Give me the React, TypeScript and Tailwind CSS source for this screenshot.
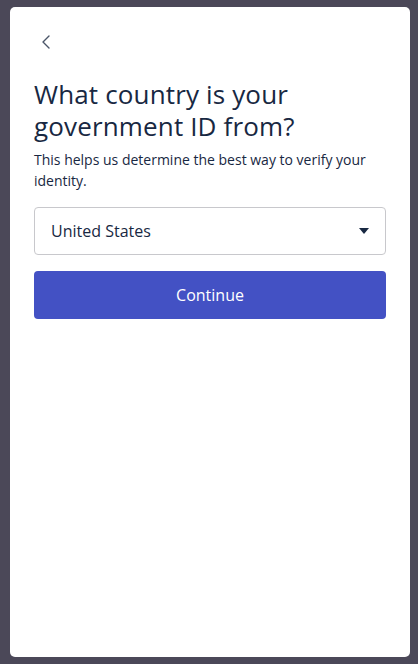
import { ChevronLeft } from "lucide-react"

export default function App() {
    return (
        <div className="w-[418px] h-[664px] bg-[#4b4858] pt-[7px] pl-[10px] pr-[8px] pb-[7px]" style={{ fontFamily: '"Open Sans", sans-serif' }}>
            <div className="bg-white rounded-[5px] h-[650px] flex flex-col px-[24px]">

                <button className="mt-[23px] w-[24px] h-[24px] flex items-center justify-center text-[#4a5568]">
                    <ChevronLeft size={24} strokeWidth={1.4} />
                </button>

                <h1 className="mt-[24px] text-[26px] leading-[32px] text-[#182842] tracking-[0.15px]">
                    What country is your government ID from?
                </h1>

                <p className="mt-[7px] text-[14px] leading-[21px] text-[#182842]">
                    This helps us determine the best way to verify your identity.
                </p>

                <div className="mt-[16px] h-[48px] border border-[#c8c8cc] rounded-[4px] flex items-center justify-between pl-[16px] pr-[16px]">
                    <span className="text-[16px] text-[#182842]">United States</span>
                    <svg width="10" height="6" viewBox="0 0 10 6">
                        <path d="M0 0 L10 0 L5 6 Z" fill="#182842" />
                    </svg>
                </div>

                <button className="mt-[16px] h-[48px] rounded-[4px] bg-[#4351c4] text-white text-[16px]">
                    Continue
                </button>
            </div>
        </div>
    )
}
